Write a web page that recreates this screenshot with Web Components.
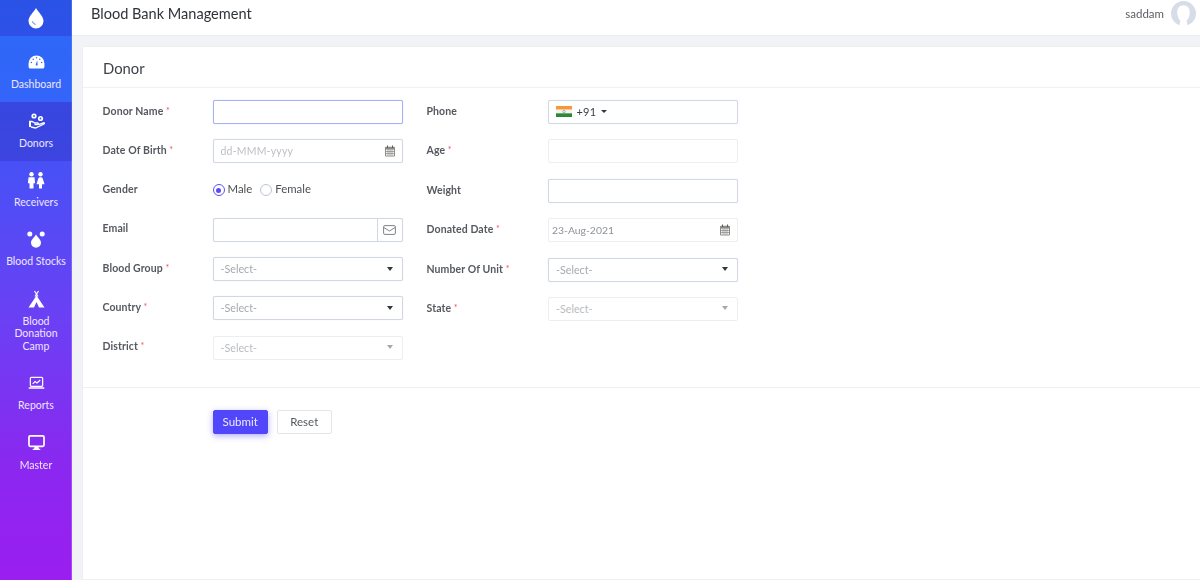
<!DOCTYPE html>
<html><head><meta charset="utf-8"><title>Donor</title>
<style>
html,body{margin:0;height:100%;overflow:hidden}
body{font-family:Lato,"Liberation Sans",sans-serif;background:#f2f3f6;color:#3d4148}
</style></head>
<body>
<app-shell>
  <side-bar slot="side">
    <nav-item kind="dashboard" label="Dashboard" first></nav-item>
    <nav-item kind="donors" label="Donors" active></nav-item>
    <nav-item kind="receivers" label="Receivers"></nav-item>
    <nav-item kind="stocks" label="Blood Stocks" tall></nav-item>
    <nav-item kind="camp" label="Blood Donation Camp" wide></nav-item>
    <nav-item kind="reports" label="Reports" tall></nav-item>
    <nav-item kind="master" label="Master"></nav-item>
  </side-bar>
  <top-bar slot="top" title="Blood Bank Management" user="saddam"></top-bar>
  <form-card title="Donor">
    <form-col slot="left">
      <form-field label="Donor Name" req><text-box focus></text-box></form-field>
      <form-field label="Date Of Birth" req><text-box placeholder="dd-MMM-yyyy" icon="cal"></text-box></form-field>
      <form-field label="Gender"><radio-pair></radio-pair></form-field>
      <form-field label="Email"><text-box icon="mail"></text-box></form-field>
      <form-field label="Blood Group" req><select-box></select-box></form-field>
      <form-field label="Country" req><select-box></select-box></form-field>
      <form-field label="District" req><select-box disabled></select-box></form-field>
    </form-col>
    <form-col slot="right" wide>
      <form-field label="Phone" wide><phone-box></phone-box></form-field>
      <form-field label="Age" req wide><text-box disabled></text-box></form-field>
      <form-field label="Weight" wide><text-box></text-box></form-field>
      <form-field label="Donated Date" req wide><text-box value="23-Aug-2021" icon="cal" disabled></text-box></form-field>
      <form-field label="Number Of Unit" req wide><select-box></select-box></form-field>
      <form-field label="State" req wide><select-box disabled></select-box></form-field>
    </form-col>
    <app-button slot="actions" primary>Submit</app-button>
    <app-button slot="actions">Reset</app-button>
  </form-card>
</app-shell>
<script>
const ICONS={
 drop:'<svg width="18" height="22" viewBox="0 0 18 22"><path fill="#fff" d="M9 1C7 5 1.500 9 1.500 14A7.500 7.500 0 0 0 16.500 14C16.500 9 11 5 9 1Z"/><path fill="none" stroke="#3a5fd8" stroke-width="1" d="M5.500 14.500c.4 1.500 1.500 2.500 3 2.800"/></svg>',
 dashboard:'<svg width="17" height="14" viewBox="0 0 18 15"><path fill="#fff" d="M9 .5A8.500 8.500 0 0 0 .5 9v3.500A2 2 0 0 0 2.500 14.500h13a2 2 0 0 0 2-2V9A8.500 8.500 0 0 0 9 .5Z"/><g fill="#3b63f2"><circle cx="3.500" cy="8" r=".8"/><circle cx="5.500" cy="4.500" r=".8"/><circle cx="9" cy="3" r=".8"/><circle cx="12.500" cy="4.500" r=".8"/><circle cx="14.500" cy="8" r=".8"/><path d="M8 11 9.800 5.500 10.300 11.300Z"/></g></svg>',
 donors:'<svg width="17" height="16" viewBox="0 0 17 16"><circle cx="6" cy="3" r="2.600" fill="#fff"/><circle cx="12.500" cy="5.500" r="2.600" fill="#fff"/><circle cx="12.500" cy="5.500" r=".9" fill="#3f55ee"/><circle cx="6" cy="3" r=".9" fill="#3f55ee"/><path fill="none" stroke="#fff" stroke-width="1.300" d="M1 8.500h3l2.500 1.300h3c1.200 0 1.200 1.700 0 1.700H6.500"/><path fill="#fff" d="M1 9h2v5H1Z"/><path fill="none" stroke="#fff" stroke-width="1.300" d="M3 14l4.500 1 8.500-4c.8-.5.300-1.500-.6-1.200L10.500 11.700"/></svg>',
 receivers:'<svg width="18" height="17" viewBox="0 0 18 17"><g fill="#fff"><circle cx="4.500" cy="2.300" r="2.200"/><circle cx="13.500" cy="2.300" r="2.200"/><path d="M1.500 5.200h6l.6 6H6.500V16.500H2.500V11.200H.9Z"/><path d="M13.500 5.200c1.500 0 2 .5 2.300 1.500l1.700 5.500H15v4.300h-3V12.200H9.500l1.700-5.500c.3-1 .8-1.500 2.300-1.500Z"/></g></svg>',
 stocks:'<svg width="18" height="17" viewBox="0 0 18 17"><g fill="#fff"><circle cx="2.800" cy="3" r="2.500"/><circle cx="15.200" cy="3" r="2.500"/><path d="M9 3.500c1.500 3 5 5 5 8.300a5 5 0 0 1-10 0C4 8.500 7.500 6.500 9 3.500Z"/></g></svg>',
 camp:'<svg width="17" height="18" viewBox="0 0 17 18"><path fill="#fff" d="M8.500 5.500 16.500 17.500H11L8.500 12 6 17.500H.5Z"/><path fill="none" stroke="#fff" stroke-width="1.200" d="M6.500 1 10 6.500M10.500 1 7 6.500"/></svg>',
 reports:'<svg width="17" height="14" viewBox="0 0 18 14"><rect x="2.500" y="1" width="13" height="9.500" rx="1" fill="none" stroke="#fff" stroke-width="1.300"/><path d="M5 8 7.500 5.500 9.500 7 13 3.800" fill="none" stroke="#fff" stroke-width="1.200"/><rect x=".5" y="11.500" width="17" height="1.700" rx=".8" fill="#fff"/></svg>',
 master:'<svg width="17" height="16" viewBox="0 0 18 17"><rect x="1" y="1" width="16" height="11" rx="1.300" fill="none" stroke="#fff" stroke-width="1.800"/><path fill="#fff" d="M7 12h4l.5 2.500H13V16H5v-1.500h1.500Z"/></svg>',
 cal:'<svg width="12" height="12" viewBox="0 0 12 12"><rect x="1" y="1.800" width="10" height="9.700" rx="1" fill="#8a8a88" /><rect x="2" y="4.600" width="8" height="6" fill="#f4f4f2"/><path stroke="#8a8a88" stroke-width=".7" d="M2 6.500h8M2 8.500h8M4 4.600v6M6 4.600v6M8 4.600v6"/><path stroke="#55585c" stroke-width="1" d="M3.500.5v2.400M8.500.5v2.400"/></svg>',
 mail:'<svg width="13" height="10" viewBox="0 0 13 10"><rect x=".6" y=".6" width="11.800" height="8.800" rx="1.300" fill="none" stroke="#7f8388" stroke-width="1"/><path d="M.8 2.500 6.500 6l5.700-3.500" fill="none" stroke="#7f8388" stroke-width="1"/></svg>'
};
function comp(name,css,render){
  customElements.define(name,class extends HTMLElement{
    constructor(){super();this.attachShadow({mode:'open'});}
    connectedCallback(){this.shadowRoot.innerHTML='<style>'+css+'</style>'+render(this);}
  });
}
comp('app-shell',`
 :host{display:flex;width:1200px;height:580px;overflow:hidden;filter:blur(.3px)}
 .main{flex:1;display:flex;flex-direction:column;min-width:0}
`,()=>`<slot name="side"></slot><div class="main"><slot name="top"></slot><slot></slot></div>`);

comp('side-bar',`
 :host{display:flex;flex-direction:column;width:72px;flex:none;height:580px;
   background:linear-gradient(180deg,#2f5cf2 0%,#4a50f6 30%,#6b40f4 55%,#8a28f0 80%,#9a1ef0 100%);
   box-shadow:inset -1px 0 0 rgba(255,255,255,.18)}
 .logo{height:36px;display:flex;align-items:center;justify-content:center;background:rgba(20,40,170,.16)}
`,()=>`<div class="logo">${ICONS.drop}</div><slot></slot>`);

comp('nav-item',`
 :host{display:flex;flex-direction:column;align-items:center;height:59px;box-sizing:border-box;padding-top:10px;
   color:#efe6ff;font-size:10.500px;line-height:12.500px;text-align:center}
 :host([tall]){height:60px}
 :host([first]){height:66px;padding-top:17px;background:rgba(40,120,255,.45)}
 :host([active]){background:rgba(35,35,170,.28)}
 :host([wide]){height:84px}
 .ic{height:20px;display:flex;align-items:center;justify-content:center;margin-top:-1px;margin-bottom:1px}
 .t{margin-top:4.500px;padding:0 2px;white-space:nowrap}
 :host([wide]) .t{padding:0 8px;white-space:normal}
`,h=>`<div class="ic">${ICONS[h.getAttribute('kind')]}</div><div class="t">${h.getAttribute('label')}</div>`);

comp('top-bar',`
 :host{display:flex;align-items:center;justify-content:space-between;height:36px;box-sizing:border-box;background:#fff;padding:0 4px 8px 19px;flex:none;border-bottom:1px solid #eceef2}
 .t{font-size:14.550px;color:#2f3338;line-height:28px}
 .u{display:flex;align-items:center;gap:7px;font-size:11.500px;color:#5a5e63}
 svg{display:block}
`,h=>`<div class="t">${h.getAttribute('title')}</div><div class="u"><span>${h.getAttribute('user')}</span><svg width="25" height="25" viewBox="0 0 24 24"><circle cx="12" cy="12" r="12" fill="#d7dde8"/><path fill="#fff" d="M12 4c-4 0-6 3-6 7 0 3 1 6 3 8 0 1.500-1 3-1 5h8c0-2-1-3.500-1-5 2-2 3-5 3-8 0-4-2-7-6-7Z"/></svg></div>`);

comp('form-card',`
 :host{display:block;flex:1;margin:11px 0 1px 11px;background:#fff;box-shadow:0 0 2px rgba(0,0,0,.06)}
 .h{height:41px;box-sizing:border-box;padding:1px 20px 0 20px;display:flex;align-items:center;border-bottom:1px solid #f0f1f4;font-size:14.800px;color:#3d4148}
 .b{display:flex;padding:12px 20px 0 19.500px;height:300px;box-sizing:border-box;border-bottom:1px solid #eef0f3}
 .a{display:flex;gap:8.500px;padding:22px 0 0 129.500px}
`,h=>`<div class="h">${h.getAttribute('title')}</div><div class="b"><slot name="left"></slot><slot name="right"></slot></div><div class="a"><slot name="actions"></slot></div>`);

comp('form-col',`
 :host{display:flex;flex-direction:column;gap:15.280px;width:324px;flex:none}
 :host([wide]){gap:15.400px}
`,()=>`<slot></slot>`);

comp('form-field',`
 :host{display:flex;align-items:center;height:24px}
 .l{width:110px;flex:none;font-size:10.500px;font-weight:700;color:#55595f;letter-spacing:.1px;margin-top:-3px}
 :host([wide]) .l{width:121.500px;margin-top:-2px}
 .r{color:#f0525f;font-weight:400;font-size:9px;position:relative;top:-1px}
 .c{width:190px;flex:none}
`,h=>`<div class="l">${h.getAttribute('label')}${h.hasAttribute('req')?' <span class="r">*</span>':''}</div><div class="c"><slot></slot></div>`);

const boxCss=`
 :host{display:block;height:24px;box-sizing:border-box;border:1px solid #d2d8e1;border-radius:2px;background:#fff;box-shadow:0 0 1px #d4dae3;font-size:10.500px;color:#a9adb2;position:relative}
 :host([disabled]){border-color:#eceef1;box-shadow:none}
 .f{display:flex;align-items:center;height:100%;padding:0 7px;justify-content:space-between;letter-spacing:.2px;box-sizing:border-box}
`;
comp('text-box',boxCss+`
 :host([focus]){border-color:#a6b4f5;box-shadow:0 0 1px #a6b4f5}
 .ic{display:flex;align-items:center;margin-right:-1px}
 .mail{align-self:stretch;border-left:1px solid #d2d8e1;width:24px;justify-content:center;margin-right:-7px}
 :host([value]) .f{color:#8f9398;letter-spacing:0;font-size:10.400px;padding-left:3px}
 :host([placeholder]) .f{color:#bcbfc4;padding-bottom:1px}
`,h=>{const i=h.getAttribute('icon');return `<div class="f"><span>${h.getAttribute('placeholder')||h.getAttribute('value')||''}</span>${i?`<span class="ic ${i}">${ICONS[i]}</span>`:''}</div>`});

comp('select-box',boxCss+`
 .f{font-size:10.700px;color:#a6a9ae;letter-spacing:0;padding-left:7px;padding-bottom:1px}
 i{width:0;height:0;border:3.500px solid transparent;border-top:4px solid #33363a;border-bottom:0;margin-right:2px}
 :host([disabled]) .f{color:#b9bcc0}
 :host([disabled]) i{border-top-color:#a5a8ac}
`,()=>`<div class="f"><span>-Select-</span><i></i></div>`);

comp('phone-box',boxCss+`
 .f{justify-content:flex-start;color:#3d4148;font-size:11px;gap:4.500px;padding-bottom:1px}
 i{width:0;height:0;border:3px solid transparent;border-top:3.500px solid #33363a;border-bottom:0}
 svg{display:block}
`,()=>`<div class="f"><svg width="16" height="11" viewBox="0 0 16 11"><rect width="16" height="3.700" fill="#f5973a"/><rect y="3.700" width="16" height="3.600" fill="#f6f3ee"/><rect y="7.300" width="16" height="3.700" fill="#2b8a36"/><circle cx="8" cy="5.500" r="1.200" fill="none" stroke="#6a6fa8" stroke-width=".5"/></svg><span>+91</span><i></i></div>`);

comp('radio-pair',`
 :host{display:flex;align-items:center;height:24px;font-size:11.400px;color:#4b4f55;margin-top:-4px}
 .o{display:flex;align-items:center;gap:3px;margin-right:8px}
 .d{width:12px;height:12px;box-sizing:border-box;border-radius:50%;border:1px solid #bfc6d2;background:#fff;position:relative;display:block;margin-top:3px}
 .d.on{border-color:#5a52f5}
 .d.on::after{content:"";position:absolute;left:2.500px;top:2.500px;width:5px;height:5px;border-radius:50%;background:#5a4cf6}
`,()=>`<span class="o"><span class="d on"></span>Male</span><span class="o"><span class="d"></span>Female</span>`);

comp('app-button',`
 :host{display:flex;align-items:center;justify-content:center;width:55.500px;height:24px;box-sizing:border-box;border:1px solid #e2e4e8;border-radius:2px;background:#fff;color:#55595f;font-size:11.500px;padding-bottom:2px}
 :host([primary]){background:#5246fb;border-color:#5246fb;color:#ebe9ff;box-shadow:0 2px 6px rgba(82,70,251,.45)}
`,()=>`<slot></slot>`);
</script>
</body></html>
